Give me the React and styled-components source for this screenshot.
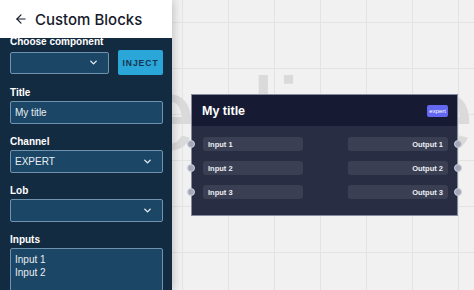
import React from "react";
import styled, { createGlobalStyle } from "styled-components";
import { ArrowLeft, ChevronDown } from "lucide-react";

const GlobalStyle = createGlobalStyle`
  html, body {
    margin: 0;
    padding: 0;
    width: 100%;
    height: 100%;
    overflow: hidden;
  }
  body {
    font-family: "Liberation Sans", Arial, sans-serif;
  }
`;

const Page = styled.div`
  display: flex;
  width: 100vw;
  height: 100vh;
  overflow: hidden;
  background: #f1f1f1;
`;

const Sidebar = styled.aside`
  width: 172px;
  flex-shrink: 0;
  display: flex;
  flex-direction: column;
  position: relative;
  z-index: 2;
  box-shadow: 2px 0 8px rgba(0, 0, 0, 0.18);
`;

const Header = styled.header`
  height: 38px;
  flex-shrink: 0;
  display: flex;
  align-items: center;
  gap: 7px;
  padding-left: 14px;
  background: #ffffff;
  color: #16192b;
  font-family: Inter, "Liberation Sans", sans-serif;
  font-size: 15px;
  font-weight: 500;
  position: relative;
  z-index: 1;
`;

const Body = styled.div`
  flex: 1;
  background: #132b40;
  padding: 0 9px 0 10px;
  overflow: hidden;
`;

const Form = styled.div`
  display: flex;
  flex-direction: column;
  gap: 12px;
  margin-top: -2px;
`;

const Field = styled.div`
  display: flex;
  flex-direction: column;
  gap: 2px;
`;

const Label = styled.label`
  color: #ffffff;
  font-size: 10px;
  font-weight: 700;
  line-height: 12px;
`;

const Row = styled.div`
  display: flex;
  align-items: center;
  gap: 9px;
`;

const Control = styled.div`
  box-sizing: border-box;
  width: ${(p) => p.$width || "100%"};
  height: ${(p) => p.$height || "23px"};
  display: flex;
  align-items: ${(p) => (p.$multi ? "flex-start" : "center")};
  justify-content: space-between;
  padding: ${(p) => (p.$multi ? "4px 4px" : "0 9px 0 4px")};
  background: #1c4665;
  border: 1px solid #6f93ae;
  border-radius: 2px;
  color: #e8eef4;
  font-size: 10px;
  line-height: 13px;
  white-space: pre-line;
`;

const InjectButton = styled.button`
  width: 45px;
  height: 25px;
  border: none;
  border-radius: 2px;
  background: #2aa6d8;
  color: #15344f;
  font-family: "Liberation Sans", Arial, sans-serif;
  font-size: 8.5px;
  font-weight: 700;
  letter-spacing: 1px;
  padding: 0;
`;

const Canvas = styled.main`
  flex: 1;
  position: relative;
  overflow: hidden;
  background-color: #f1f1f1;
  background-image: linear-gradient(#e3e3e3 1px, transparent 1px),
    linear-gradient(90deg, #e3e3e3 1px, transparent 1px);
  background-size: 46px 46px;
  background-position: 10px 22px;
`;

const Watermark = styled.div`
  position: absolute;
  left: -34px;
  top: 62px;
  font-family: "Liberation Sans", Arial, sans-serif;
  font-size: 104px;
  font-weight: 400;
  letter-spacing: 2px;
  color: #dadada;
  line-height: 1;
  user-select: none;
`;

const Node = styled.div`
  position: absolute;
  left: 19px;
  top: 94px;
  width: 267px;
  box-sizing: border-box;
  background: rgba(37, 42, 64, 0.985);
  border: 1px solid #858aa0;
  display: flex;
  flex-direction: column;
`;

const NodeHeader = styled.div`
  height: 31px;
  display: flex;
  align-items: center;
  justify-content: space-between;
  padding: 0 9px 0 10px;
  background: #171a33;
  color: #ffffff;
  font-size: 12.5px;
  font-weight: 700;
`;

const Badge = styled.span`
  background: #6467ef;
  color: #ffffff;
  font-size: 6px;
  font-weight: 400;
  padding: 3px 2px;
  border-radius: 2px;
  line-height: 6px;
`;

const Ports = styled.div`
  display: flex;
  flex-direction: column;
  gap: 10px;
  padding: 11px 0 16px;
`;

const PortRow = styled.div`
  position: relative;
  display: flex;
  justify-content: space-between;
  padding: 0 9px 0 11px;
`;

const Pill = styled.div`
  width: 100px;
  height: 14px;
  box-sizing: border-box;
  display: flex;
  align-items: center;
  justify-content: ${(p) => (p.$out ? "flex-end" : "flex-start")};
  padding: 0 5px;
  border-radius: 3px;
  background: rgba(255, 255, 255, 0.09);
  color: #eceef4;
  font-size: 7.5px;
  font-weight: 700;
`;

const Handle = styled.span`
  position: absolute;
  top: 3px;
  ${(p) => (p.$right ? "right: -5px;" : "left: -5px;")}
  width: 8px;
  height: 8px;
  box-sizing: border-box;
  border-radius: 50%;
  background: #a3a7b8;
  border: 1.5px solid #cfd2dc;
`;

const ports = [1, 2, 3];

export default function App() {
  return (
    <>
      <GlobalStyle />
      <Page>
        <Sidebar>
          <Header>
            <ArrowLeft size={14} strokeWidth={2} />
            Custom Blocks
          </Header>
          <Body>
            <Form>
              <Field>
                <Label>Choose component</Label>
                <Row>
                  <Control $width="99px" $height="22px">
                    <span />
                    <ChevronDown size={11} strokeWidth={3} />
                  </Control>
                  <InjectButton>INJECT</InjectButton>
                </Row>
              </Field>
              <Field>
                <Label>Title</Label>
                <Control>My title</Control>
              </Field>
              <Field>
                <Label>Channel</Label>
                <Control>
                  EXPERT
                  <ChevronDown size={11} strokeWidth={3} />
                </Control>
              </Field>
              <Field>
                <Label>Lob</Label>
                <Control>
                  <span />
                  <ChevronDown size={11} strokeWidth={3} />
                </Control>
              </Field>
              <Field>
                <Label>Inputs</Label>
                <Control $multi $height="60px">
                  {"Input 1\nInput 2"}
                </Control>
              </Field>
            </Form>
          </Body>
        </Sidebar>
        <Canvas>
          <Watermark>eclipse</Watermark>
          <Node>
            <NodeHeader>
              My title
              <Badge>expert</Badge>
            </NodeHeader>
            <Ports>
              {ports.map((n) => (
                <PortRow key={n}>
                  <Handle />
                  <Pill>Input {n}</Pill>
                  <Pill $out>Output {n}</Pill>
                  <Handle $right />
                </PortRow>
              ))}
            </Ports>
          </Node>
        </Canvas>
      </Page>
    </>
  );
}
